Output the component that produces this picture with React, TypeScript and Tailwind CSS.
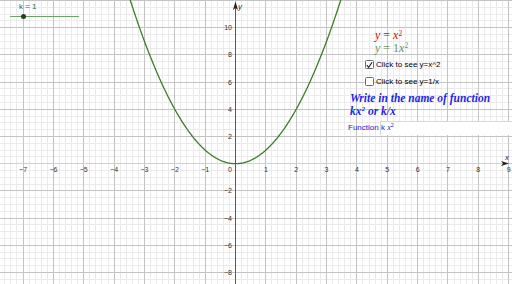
import React from "react";

const OX = 235.5;
const OY = 163.7;
const SX = 30.35;
const SY = 13.6;
const px = (x: number) => OX + x * SX;
const py = (y: number) => OY - y * SY;
const snap = (v: number) => Math.round(v - 0.5) + 0.5;

function Graph() {
  const minorV: number[] = [];
  const majorV: number[] = [];
  for (let i = -45; i <= 50; i++) {
    const x = snap(px(i * 0.2));
    if (x < 0 || x > 512) continue;
    if (i % 5 === 0) majorV.push(x);
    else minorV.push(x);
  }
  const minorH: number[] = [];
  const majorH: number[] = [];
  for (let j = -40; j <= 50; j++) {
    const y = snap(py(j * 0.5));
    if (y < 0 || y > 284) continue;
    if (j % 4 === 0) majorH.push(y);
    else minorH.push(y);
  }

  let d = "";
  for (let x = -3.7; x <= 3.7; x += 0.02) {
    d += (d ? " L" : "M") + px(x).toFixed(2) + " " + py(x * x).toFixed(2);
  }

  const xTicks = [-7, -6, -5, -4, -3, -2, -1, 1, 2, 3, 4, 5, 6, 7, 8, 9];
  const yTicks = [10, 8, 6, 4, 2, -2, -4, -6, -8];
  const ax = snap(OX);
  const ay = snap(OY);

  return (
    <svg width={512} height={284} className="absolute inset-0" style={{ fontFamily: "'Liberation Sans', Arial, sans-serif" }}>
      <rect width={512} height={284} fill="#ffffff" />
      {minorV.map((x) => (
        <line key={"mv" + x} x1={x} y1={0} x2={x} y2={284} stroke="#ebebeb" strokeWidth={1} />
      ))}
      {minorH.map((y) => (
        <line key={"mh" + y} x1={0} y1={y} x2={512} y2={y} stroke="#ebebeb" strokeWidth={1} />
      ))}
      {majorV.map((x) => (
        <line key={"Mv" + x} x1={x} y1={0} x2={x} y2={284} stroke="#c4c4c4" strokeWidth={1} />
      ))}
      {majorH.map((y) => (
        <line key={"Mh" + y} x1={0} y1={y} x2={512} y2={y} stroke="#c4c4c4" strokeWidth={1} />
      ))}

      {/* axes */}
      <line x1={0} y1={ay} x2={503} y2={ay} stroke="#d0d0d0" strokeWidth={1} />
      <line x1={ax} y1={8} x2={ax} y2={284} stroke="#5a5a5a" strokeWidth={1} />
      <path d={`M${ax} 1.5 L${ax + 2.5} 10 L${ax} 8 L${ax - 2.5} 10 Z`} fill="#222" />
      <path d={`M509 ${ay} L501 ${ay - 2.5} L503 ${ay} L501 ${ay + 2.5} Z`} fill="#222" />
      <text x={238} y={9} fontSize={8} fontStyle="italic" fill="#222">y</text>
      <text x={505} y={160} fontSize={7.5} fontStyle="italic" fill="#222">x</text>

      {xTicks.map((t) => (
        <text key={"xt" + t} x={px(t)} y={172} fontSize={7} textAnchor="middle" fill="#333">
          {t < 0 ? "\u2212" + Math.abs(t) : t}
        </text>
      ))}
      <text x={230} y={172} fontSize={7} textAnchor="middle" fill="#333">0</text>
      {yTicks.map((t) => (
        <text key={"yt" + t} x={232} y={py(t) + 2.5} fontSize={7} textAnchor="end" fill="#333">
          {t < 0 ? "\u2212" + Math.abs(t) : t}
        </text>
      ))}

      <path d={d} fill="none" stroke="#3f7b2c" strokeWidth={1.3} />
    </svg>
  );
}

function Check({ checked }: { checked: boolean }) {
  return (
    <span className="w-[9px] h-[9px] border border-[#6a6a6a] rounded-[1.5px] bg-white flex items-center justify-center">
      {checked && (
        <svg width="8" height="8" viewBox="0 0 8 8">
          <path d="M1 4.2 L3 6.6 L7 0.8" fill="none" stroke="#222" strokeWidth={1.3} />
        </svg>
      )}
    </span>
  );
}

function Sq({ size }: { size: string }) {
  return <span className={`relative top-[-0.45em] leading-[0] ${size}`}>2</span>;
}

export default function App() {
  return (
    <div className="relative w-[512px] h-[284px] overflow-hidden bg-white font-['Liberation_Sans',Arial,sans-serif]">
      <Graph />

      {/* slider k */}
      <div className="absolute left-[10px] top-[2px] w-[69px] flex flex-col">
        <span className="pl-[9px] text-[8px] leading-[10px] text-[#2e6b2e]">k = 1</span>
        <div className="relative mt-[3.5px] h-[1.5px] bg-[#6aa56a]">
          <div className="absolute left-[10.5px] top-[-2px] w-[5.5px] h-[5.5px] rounded-full bg-[#2a3a2a]" />
        </div>
      </div>

      {/* right panel */}
      <div className="absolute left-[348px] top-[29px] right-0 flex flex-col">
        <div className="pl-[27px] flex flex-col font-['Liberation_Serif',serif] text-[12px] leading-[12.5px]">
          <div className="h-[12.5px] text-[#e00000] whitespace-nowrap">
            <i>y</i> = <i>x</i>
            <Sq size="text-[7.5px]" />
          </div>
          <div className="h-[12.5px] text-[#6b8f5e] whitespace-nowrap">
            <i>y</i> = 1<i>x</i>
            <Sq size="text-[7.5px]" />
          </div>
        </div>

        <div className="mt-[6px] pl-[17px] flex flex-col gap-[7.5px] text-[8px] leading-[9px] text-black">
          <label className="flex items-center gap-[2px]">
            <Check checked />
            <span>Click to see y=x^2</span>
          </label>
          <label className="flex items-center gap-[2px]">
            <Check checked={false} />
            <span>Click to see y=1/x</span>
          </label>
        </div>

        <div className="mt-[6.5px] pl-[2px] flex flex-col font-['Liberation_Serif',serif] italic font-bold text-[11.5px] leading-[12.5px] text-[#1f1fe6] whitespace-nowrap">
          <div className="h-[12.5px]">Write in the name of function</div>
          <div className="h-[12.5px]">
            kx<Sq size="text-[7px]" /> or k/x
          </div>
        </div>

        <div className="relative mt-[3.5px] flex items-center h-[14px]">
          <div className="absolute left-[32px] right-0 inset-y-0 bg-white border-t border-l border-[#d8d8d8]" />
          <span className="relative text-[8px] leading-[10px] text-[#1a1ad0] whitespace-nowrap">
            Function k <i className="font-['Liberation_Serif',serif]">x</i>
            <Sq size="text-[5.5px]" />
          </span>
        </div>
      </div>
    </div>
  );
}
